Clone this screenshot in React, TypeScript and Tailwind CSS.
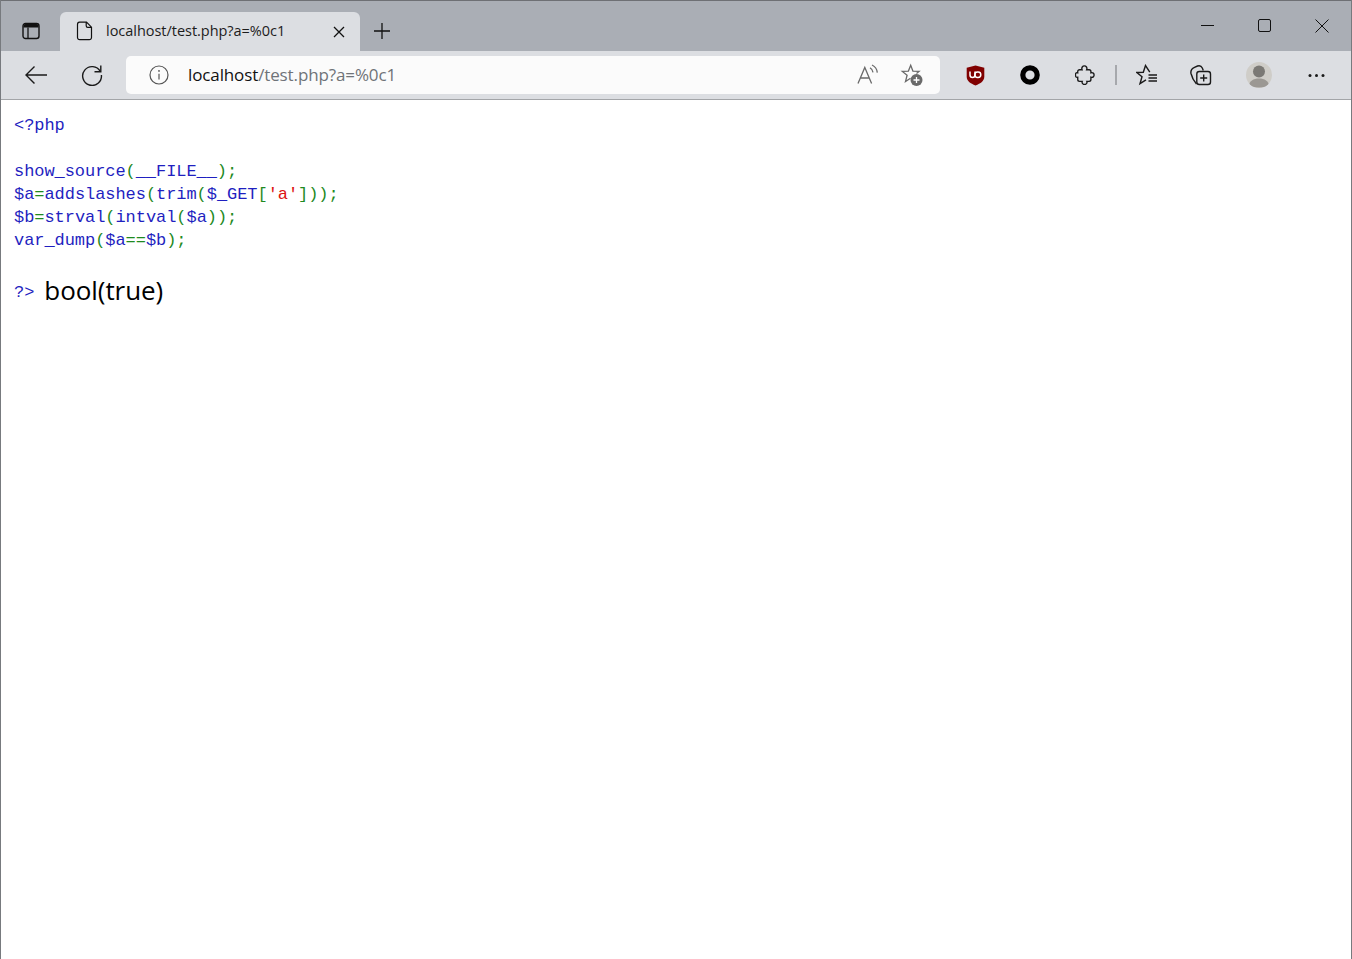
import React from "react";

const B = ({ children }: { children: React.ReactNode }) => <span className="text-[#1f1fc0]">{children}</span>;
const G = ({ children }: { children: React.ReactNode }) => <span className="text-[#1f8a1f]">{children}</span>;
const R = ({ children }: { children: React.ReactNode }) => <span className="text-[#dd1111]">{children}</span>;

const S = "#1a1a1a";

function Btn({ w, children }: { w: string; children: React.ReactNode }) {
  return <div className={`flex items-center justify-center h-full shrink-0 ${w}`}>{children}</div>;
}

export default function App() {
  return (
    <div className="h-[959px] w-[1352px] overflow-hidden bg-white flex flex-col border-l border-r border-[#777a7e] border-t-0 font-['Open_Sans','Noto_Sans',sans-serif]">
      {/* tab strip */}
      <div className="h-[51px] shrink-0 bg-[#aaaeb5] border-t border-[#6e7074] flex items-end pl-[14px]">
        <div className="h-[39px] w-[31px] flex items-center justify-center shrink-0 pb-[2px]">
          <svg width="18" height="18" viewBox="0 0 18 18" fill="none">
            <rect x="1" y="1.500" width="16" height="15" rx="2.500" stroke="#111" strokeWidth="1.400" />
            <path d="M1.500 5.400h15V4a2 2 0 0 0-2-2h-11a2 2 0 0 0-2 2z" fill="#111" />
            <path d="M6 5.500v10.500" stroke="#111" strokeWidth="1.300" />
          </svg>
        </div>
        <div className="ml-[14px] w-[300px] h-[39px] bg-[#dcdee2] rounded-t-[6px] flex items-center pl-[15px] pr-[15px] pb-[2px] shrink-0">
          <svg width="18" height="20" viewBox="0 0 18 20" fill="none" className="shrink-0 ml-[1px]">
            <path d="M3.500 1.200h7l5 5v10.300a2.200 2.200 0 0 1-2.200 2.200H3.700a2.200 2.200 0 0 1-2.200-2.200V3.400a2.200 2.200 0 0 1 2-2.200zM10.200 1.400v3.400a1.600 1.600 0 0 0 1.600 1.600h3.500" stroke="#111" strokeWidth="1.200" />
          </svg>
          <span className="ml-[12px] text-[14.5px] text-[#1c1c1c] tracking-[-0.03px] flex-1 whitespace-nowrap">localhost/test.php?a=%0c1</span>
          <svg width="12" height="12" viewBox="0 0 12 12" stroke="#111" strokeWidth="1.300" className="shrink-0 mt-[2px]">
            <path d="M1 1l10 10M11 1L1 11" />
          </svg>
        </div>
        <div className="ml-[13px] h-[39px] flex items-center shrink-0 pb-[2px]">
          <svg width="18" height="18" viewBox="0 0 18 18" stroke="#111" strokeWidth="1.300">
            <path d="M9 1v16M1 9h16" />
          </svg>
        </div>
        <div className="flex-1" />
        <div className="h-[49px] flex items-start self-start shrink-0 mr-[1px]">
          <div className="w-[57px] h-[49px] flex items-center justify-center">
            <svg width="13" height="13" viewBox="0 0 13 13" stroke="#111" strokeWidth="1"><path d="M0 6.500h13" /></svg>
          </div>
          <div className="w-[57px] h-[49px] flex items-center justify-center">
            <svg width="13" height="13" viewBox="0 0 13 13" fill="none" stroke="#111" strokeWidth="1"><rect x=".5" y=".5" width="12" height="12" rx="1.500" /></svg>
          </div>
          <div className="w-[57px] h-[49px] flex items-center justify-center">
            <svg width="14" height="14" viewBox="0 0 14 14" stroke="#111" strokeWidth="1"><path d="M.5.500l13 13M13.500.500l-13 13" /></svg>
          </div>
        </div>
      </div>
      {/* toolbar */}
      <div className="h-[49px] shrink-0 bg-[#dcdee2] border-b border-[#a3a5a8] flex items-center pl-[6px]">
        <Btn w="w-[58px]">
          <svg width="24" height="20" viewBox="0 0 24 20" fill="none" stroke="#1a1a1a" strokeWidth="1.400"><path d="M23 10H2M10.500 1.500L2 10l8.500 8.500" /></svg>
        </Btn>
        <Btn w="w-[54px]">
          <svg width="22" height="22" viewBox="0 0 22 22" fill="none" stroke="#1a1a1a" strokeWidth="1.400"><path d="M19.300 7.500A9.400 9.400 0 1 0 20.400 11" /><path d="M19.800 1.500v6.300h-6.300" /></svg>
        </Btn>
        <div className="ml-[7px] w-[814px] h-[38px] bg-[#fbfbfb] rounded-[5px] flex items-center pl-[23px] shrink-0">
          <svg width="20" height="20" viewBox="0 0 20 20" fill="none" className="shrink-0">
            <circle cx="10" cy="10" r="9" stroke="#555" strokeWidth="1.200" />
            <path d="M10 8.800v5.600" stroke="#555" strokeWidth="1.200" />
            <circle cx="10" cy="5.900" r=".9" fill="#555" />
          </svg>
          <span className="ml-[19px] text-[17px] tracking-[-0.12px] whitespace-nowrap text-[#6f7378]">
            <span className="text-[#111]">localhost</span>/test.php?a=%0c1
          </span>
          <div className="flex-1" />
          <svg width="22" height="22" viewBox="0 0 22 22" fill="none" stroke="#6a6a6a" strokeWidth="1.300" className="shrink-0 mr-[1px]">
            <path d="M1 19.500L7.800 3.500l6.800 16M3.400 14h8.800" />
            <path d="M13 3.800a6 6 0 0 1 3 4.500M15 1a9.500 9.500 0 0 1 5.300 7.600" />
          </svg>
          <svg width="24" height="24" viewBox="0 0 24 24" fill="none" className="ml-[20px] mr-[16px] shrink-0">
            <path d="M10.500 15.300l-5 3.200 1.600-6.300L2.300 8.400l6.100-.3 2.300-5.800 2.200 5.800 6.200.3-2.600 2.200" stroke="#6a6a6a" strokeWidth="1.300" />
            <circle cx="16.500" cy="17" r="6" fill="#6a6a6a" />
            <path d="M16.500 14v6M13.500 17h6" stroke="#fff" strokeWidth="1.300" />
          </svg>
        </div>
        <Btn w="ml-[8px] w-[54px]">
          <svg width="19" height="21" viewBox="0 0 19 21">
            <path d="M9.500 0.500L18.300 2.800v9c0 4-3.600 6.800-8.800 8.700C4.300 18.600.7 15.800.7 11.800v-9z" fill="#800000" />
            <path d="M4 6.500v3.500a2.500 2.500 0 0 0 2.500 2.500a2.500 2.500 0 0 0 2.500-2.500V6.500" fill="none" stroke="#fff" strokeWidth="1.500" />
            <rect x="8.800" y="7" width="6" height="5.500" rx="2.700" fill="none" stroke="#fff" strokeWidth="1.500" />
          </svg>
        </Btn>
        <Btn w="w-[55px]">
          <svg width="20" height="20" viewBox="0 0 20 20"><circle cx="10" cy="10" r="7.200" fill="none" stroke="#000" strokeWidth="5.200" /></svg>
        </Btn>
        <Btn w="w-[55px]">
          <svg width="20" height="20" viewBox="0 0 22 22" fill="none" stroke="#1a1a1a" strokeWidth="1.500" className="ml-[1px]">
            <path d="M7.800 5.200C6.800 2.800 8.500 1 10.300 1s3.500 1.800 2.500 4.200h2.700a2 2 0 0 1 2 2v1.400c2.300-.8 3.500.9 3.500 2.400s-1.200 3.200-3.500 2.400V16a2 2 0 0 1-2 2H13c.8 2-1 3.500-2.500 3.500S7.200 20 8 18H5a2 2 0 0 1-2-2v-2.500c-2 .5-2.500-1-2.500-2.500s.5-3 2.500-2.400V7.200a2 2 0 0 1 2-2z" />
          </svg>
        </Btn>
        <div className="w-[2px] h-[20px] bg-[#a6a8ac] ml-[3px] shrink-0" />
        <Btn w="ml-[2px] w-[56px]">
          <svg width="22" height="22" viewBox="0 0 22 22" fill="none" stroke={S} strokeWidth="1.400">
            <path d="M13.800 8.200L9.500 1.500 7.300 8.200.8 8.500l5.200 4.200-2 7 6-3.800" />
            <path d="M12.500 11h8.500M12.500 14h8.500M12.500 17h8.500" />
          </svg>
        </Btn>
        <Btn w="w-[51px]">
          <svg width="22" height="22" viewBox="0 0 22 22" fill="none" stroke={S} strokeWidth="1.400">
            <path d="M6.500 20C3.800 17 1.800 13 1 9.500c-.5-2.500 1-5 3.500-6.200l3-1.300c2-.7 4 .3 4.800 2l1 2.500" />
            <rect x="6.800" y="7.500" width="13.700" height="13" rx="2.500" fill="#dcdee2" />
            <path d="M13.700 10.500v7M10.200 14h7" />
          </svg>
        </Btn>
        <Btn w="w-[66px]">
          <div className="w-[26px] h-[26px] rounded-full bg-[#cfcdc8] relative overflow-hidden">
            <svg width="26" height="26" viewBox="0 0 26 26">
              <circle cx="13" cy="9.500" r="6" fill="#7b7975" />
              <path d="M3 24c0-5 4.500-7.500 10-7.500S23 19 23 24c-3 2-17 2-20 0z" fill="#9b9893" />
            </svg>
          </div>
        </Btn>
        <Btn w="w-[48px]">
          <svg width="17" height="5" viewBox="0 0 17 5" fill="#1a1a1a"><circle cx="2" cy="2.500" r="1.500" /><circle cx="8.500" cy="2.500" r="1.500" /><circle cx="15" cy="2.500" r="1.500" /></svg>
        </Btn>
      </div>
      {/* page */}
      <div className="flex-1 bg-white pl-[13px] pt-[14px]">
        <div className="font-['Liberation_Mono',monospace] text-[17px] tracking-[-0.06px] leading-[23px] whitespace-pre">
          <div><B>&lt;?php</B></div>
          <div>&nbsp;</div>
          <div><B>show_source</B><G>(</G><B>__FILE__</B><G>);</G></div>
          <div><B>$a</B><G>=</G><B>addslashes</B><G>(</G><B>trim</B><G>(</G><B>$_GET</B><G>[</G><R>'a'</R><G>]));</G></div>
          <div><B>$b</B><G>=</G><B>strval</B><G>(</G><B>intval</B><G>(</G><B>$a</B><G>));</G></div>
          <div><B>var_dump</B><G>(</G><B>$a</B><G>==</G><B>$b</B><G>);</G></div>
          <div>&nbsp;</div>
          <div className="flex items-start mt-[2px]"><span className="mt-[4px]"><B>?&gt;</B></span><span className="ml-[10px] font-['Open_Sans',sans-serif] text-[26px] leading-[26px] text-black">bool(true)</span></div>
        </div>
      </div>
    </div>
  );
}
